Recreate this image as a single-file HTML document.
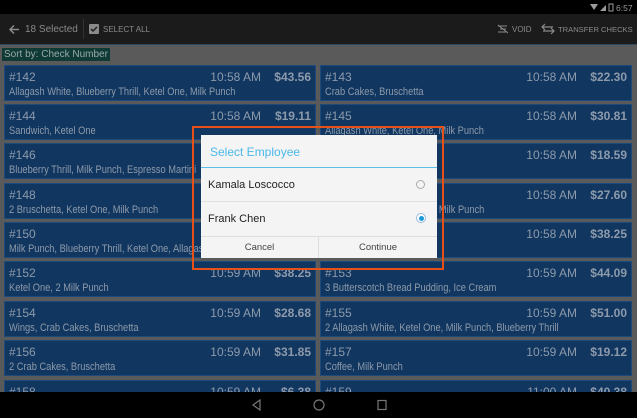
<!DOCTYPE html>
<html><head><meta charset="utf-8"><style>
*{margin:0;padding:0;box-sizing:border-box}
body{width:637px;height:418px;overflow:hidden;background:#5a5a5a;font-family:"Liberation Sans",sans-serif;position:relative}
span,div{white-space:nowrap}
.status{position:absolute;left:0;top:0;width:637px;height:14px;background:#000;color:#9a9a9a;font-size:9px}
.tool{position:absolute;left:0;top:14px;width:637px;height:31px;background:#1b1b1b;color:#8a8a8a;border-bottom:1px solid #2a4a66}
.sort{position:absolute;left:2px;top:48px;height:13px;padding:0 2px;background:#0f3a35;color:#9aa;font-size:10px;line-height:13px}
.card{position:absolute;width:312px;height:36px;background:#11365f;border:1px solid #1d4a7a;color:#8d9aab;overflow:hidden}
.card .n{position:absolute;left:4px;top:4px;font-size:12px}
.card .t{position:absolute;right:54px;top:4px;font-size:12px}
.card .p{position:absolute;right:4px;top:4px;font-size:12px;font-weight:bold}
.card .d{position:absolute;left:4px;top:20px;font-size:10.8px;transform:scaleX(0.86);transform-origin:0 0}
.nav{position:absolute;left:0;top:392px;width:637px;height:26px;background:#000}
.dlg{position:absolute;left:201px;top:135px;width:236px;height:123px;background:#f4f4f4}
.frame{position:absolute;left:192px;top:126px;width:252px;height:144px;border:2px solid #e8501a}
</style></head><body>
<div class="status">
<svg style="position:absolute;left:588px;top:3px" width="46" height="9"><path d="M2 1h8l-4 6z" fill="#9a9a9a"/><path d="M12 8l6-6v6z" fill="#9a9a9a"/><rect x="21" y="1" width="4" height="7" fill="none" stroke="#9a9a9a"/><text x="28" y="8" font-size="8.5" fill="#9a9a9a" font-family="Liberation Sans">6:57</text></svg>
</div>
<div class="tool">
<svg style="position:absolute;left:8px;top:10px" width="12" height="11"><path d="M11 5.5H2M6 1.5L2 5.5l4 4" stroke="#8a8a8a" stroke-width="1.5" fill="none"/></svg>
<span style="position:absolute;left:25px;top:10px;font-size:10px">18 Selected</span>
<div style="position:absolute;left:83px;top:5px;width:1px;height:20px;background:#333"></div>
<svg style="position:absolute;left:89px;top:10px" width="10" height="10"><rect width="10" height="10" rx="1" fill="#8a8a8a"/><path d="M2 5l2 2 4-4" stroke="#1b1b1b" stroke-width="1.4" fill="none"/></svg>
<span style="position:absolute;left:103px;top:11px;font-size:8px">SELECT ALL</span>
<svg style="position:absolute;left:497px;top:10px" width="12" height="10"><path d="M1 2h9M3 5h6M1 8h8M1 1l10 8" stroke="#8a8a8a" fill="none"/></svg>
<span style="position:absolute;left:512px;top:11px;font-size:8px">VOID</span>
<svg style="position:absolute;left:541px;top:9px" width="14" height="12"><path d="M4 1L1 4l3 3M1 4h11M10 5l3 3-3 3M13 8H2" stroke="#8a8a8a" stroke-width="1.2" fill="none"/></svg>
<span style="position:absolute;left:558px;top:11px;font-size:7.6px">TRANSFER CHECKS</span>
</div>
<div class="sort">Sort by: Check Number</div>

<div class="card" style="left:4px;top:65px"><span class="n">#142</span><span class="t">10:58 AM</span><span class="p">$43.56</span><span class="d">Allagash White, Blueberry Thrill, Ketel One, Milk Punch</span></div>
<div class="card" style="left:320px;top:65px"><span class="n">#143</span><span class="t">10:58 AM</span><span class="p">$22.30</span><span class="d">Crab Cakes, Bruschetta</span></div>
<div class="card" style="left:4px;top:104px"><span class="n">#144</span><span class="t">10:58 AM</span><span class="p">$19.11</span><span class="d">Sandwich, Ketel One</span></div>
<div class="card" style="left:320px;top:104px"><span class="n">#145</span><span class="t">10:58 AM</span><span class="p">$30.81</span><span class="d">Allagash White, Ketel One, Milk Punch</span></div>
<div class="card" style="left:4px;top:143px"><span class="n">#146</span><span class="t">10:58 AM</span><span class="p">$26.50</span><span class="d">Blueberry Thrill, Milk Punch, Espresso Martini</span></div>
<div class="card" style="left:320px;top:143px"><span class="n">#147</span><span class="t">10:58 AM</span><span class="p">$18.59</span><span class="d">Bread Pudding, Ice Cream</span></div>
<div class="card" style="left:4px;top:183px"><span class="n">#148</span><span class="t">10:58 AM</span><span class="p">$24.10</span><span class="d">2 Bruschetta, Ketel One, Milk Punch</span></div>
<div class="card" style="left:320px;top:183px"><span class="n">#149</span><span class="t">10:58 AM</span><span class="p">$27.60</span><span class="d">Ketel One, Blueberry Thrill, Milk Punch</span></div>
<div class="card" style="left:4px;top:222px"><span class="n">#150</span><span class="t">10:58 AM</span><span class="p">$41.20</span><span class="d">Milk Punch, Blueberry Thrill, Ketel One, Allagash White</span></div>
<div class="card" style="left:320px;top:222px"><span class="n">#151</span><span class="t">10:58 AM</span><span class="p">$38.25</span><span class="d">Crab Cakes, Bruschetta</span></div>
<div class="card" style="left:4px;top:261px"><span class="n">#152</span><span class="t">10:59 AM</span><span class="p">$38.25</span><span class="d">Ketel One, 2 Milk Punch</span></div>
<div class="card" style="left:320px;top:261px"><span class="n">#153</span><span class="t">10:59 AM</span><span class="p">$44.09</span><span class="d">3 Butterscotch Bread Pudding, Ice Cream</span></div>
<div class="card" style="left:4px;top:301px"><span class="n">#154</span><span class="t">10:59 AM</span><span class="p">$28.68</span><span class="d">Wings, Crab Cakes, Bruschetta</span></div>
<div class="card" style="left:320px;top:301px"><span class="n">#155</span><span class="t">10:59 AM</span><span class="p">$51.00</span><span class="d">2 Allagash White, Ketel One, Milk Punch, Blueberry Thrill</span></div>
<div class="card" style="left:4px;top:340px"><span class="n">#156</span><span class="t">10:59 AM</span><span class="p">$31.85</span><span class="d">2 Crab Cakes, Bruschetta</span></div>
<div class="card" style="left:320px;top:340px"><span class="n">#157</span><span class="t">10:59 AM</span><span class="p">$19.12</span><span class="d">Coffee, Milk Punch</span></div>
<div class="card" style="left:4px;top:380px"><span class="n">#158</span><span class="t">10:59 AM</span><span class="p">$6.38</span></div>
<div class="card" style="left:320px;top:380px"><span class="n">#159</span><span class="t">11:00 AM</span><span class="p">$40.38</span></div>

<div class="nav">
<svg style="position:absolute;left:248px;top:6px" width="140" height="14"><path d="M12 2L5 7l7 5z" stroke="#777" stroke-width="1.2" fill="none"/><circle cx="71" cy="7" r="5" stroke="#777" stroke-width="1.2" fill="none"/><rect x="130" y="2.5" width="8" height="9" stroke="#777" stroke-width="1.2" fill="none"/></svg>
</div>

<div class="dlg">
<div style="position:absolute;left:9px;top:10px;font-size:12px;color:#4ab8e8">Select Employee</div>
<div style="position:absolute;left:0;top:32px;width:236px;height:1px;background:#5bc0e8"></div>
<div style="position:absolute;left:7px;top:44px;font-size:11px;color:#222">Kamala Loscocco</div>
<div style="position:absolute;left:215px;top:45px;width:9px;height:9px;border:1px solid #aaa;border-radius:50%"></div>
<div style="position:absolute;left:0;top:66px;width:236px;height:1px;background:#e0e0e0"></div>
<div style="position:absolute;left:7px;top:78px;font-size:11px;color:#222">Frank Chen</div>
<div style="position:absolute;left:215px;top:78px;width:10px;height:10px;border:1px solid #9bd;border-radius:50%;background:#fff"><div style="position:absolute;left:1.5px;top:1.5px;width:5px;height:5px;border-radius:50%;background:#1a9ad6"></div></div>
<div style="position:absolute;left:0;top:101px;width:236px;height:1px;background:#ddd"></div>
<div style="position:absolute;left:117px;top:101px;width:1px;height:22px;background:#ddd"></div>
<div style="position:absolute;left:0;top:107px;width:117px;text-align:center;font-size:9.5px;color:#444">Cancel</div>
<div style="position:absolute;left:118px;top:107px;width:118px;text-align:center;font-size:9.5px;color:#444">Continue</div>
</div>
<div class="frame"></div>
</body></html>
